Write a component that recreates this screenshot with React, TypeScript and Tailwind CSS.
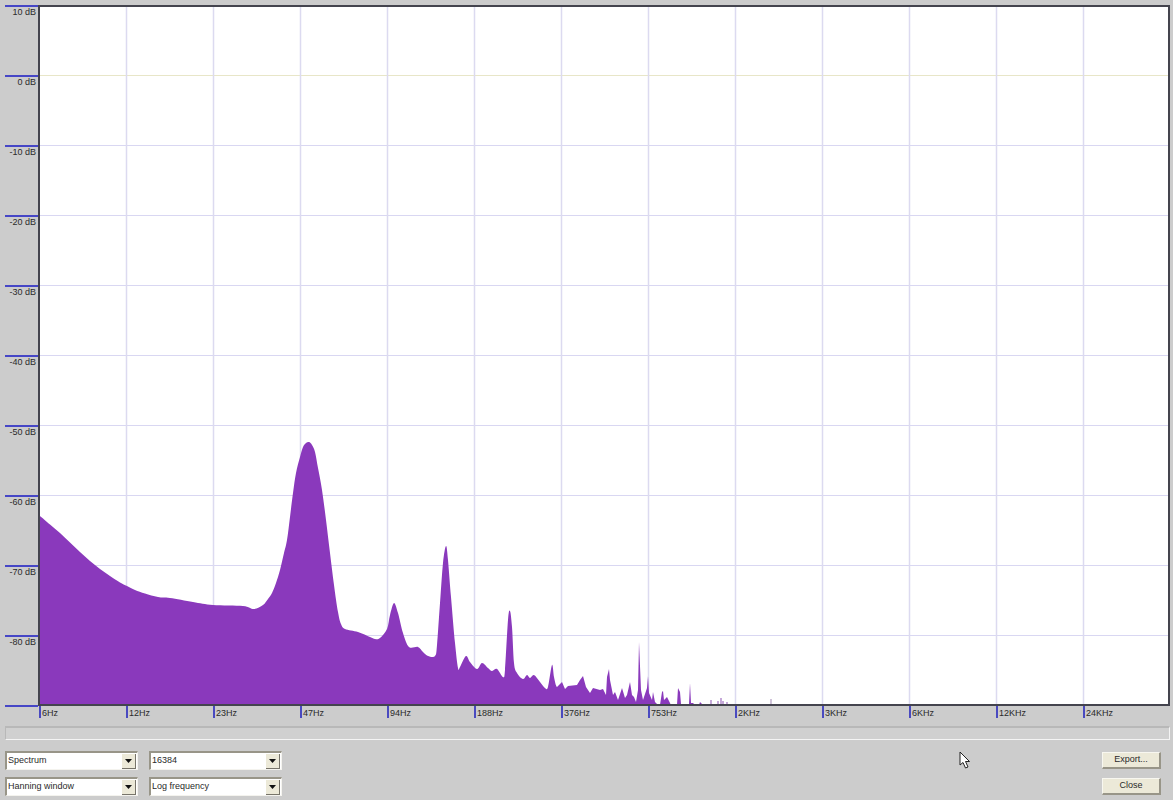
const pts: [number, number][] = [
  [40,516],[50,524.5],[60,533],[70,542.5],[80,552],[90,561],[100,569],[110,576],[120,582.5],[127,586],[135,590],[145,593.5],[158,597],[170,598],[193,602],[213,605],[243,606],[254,609],[263,605],[268,599],[272,593],[276,583],[280,570],[284,553],[287,540],[290,517],[293,493],[296,473],[300,457],[303,447],[306,443],[309,442],[312,445],[315,452],[318,468],[322,490],[326,520],[330,553],[334,585],[338,612],[341,624],[345,629],[358,632],[370,637],[375,639],[380,638],[387,629],[390,615],[394,603],[398,613],[403,633],[409,647],[418,647],[423,652],[428,656],[435,656],[437,645],[440,603],[443,563],[446,546],[448,560],[451,597],[455,643],[458,668],[460,667],[466,656],[470,662],[477,669],[482,663],[488,668],[492,671],[497,669],[503,677],[505,670],[508,620],[510,611],[512,627],[514,663],[517,673],[523,679],[527,675],[530,678],[534,675],[540,682],[545,688],[548,687],[552,665],[554,677],[557,687],[562,682],[565,689],[568,686],[577,685],[580,680],[583,676],[586,687],[590,693],[593,688],[600,690],[603,689],[606,695],[607,677],[609,669],[610,680],[613,695],[615,692],[618,700],[622,688],[625,698],[627,695],[630,682],[632,695],[634,697],[636,702],[638,690],[639,642],[641,690],[643,700],[647,688],[648,676],[649,693],[652,700],[653,692],[655,702],[657,704],[660,705],[662,692],[663,691],[664,700],[667,697],[669,701],[671,705],[677,705],[678,688],[680,692],[681,704],[689,704],[690,683],[691,703],[693,703],[695,705],[699,705],[700,702],[703,705],[727,705],
];

// Smooth curve through the low-frequency part, straight segments through the dense spikes.
function buildPath(points: [number, number][]) {
  let d = `M40,705 L${points[0][0]},${points[0][1]}`;
  for (let i = 1; i < points.length; i++) {
    const p1 = points[i - 1];
    const p2 = points[i];
    if (p2[0] > 560) {
      d += ` L${p2[0]},${p2[1]}`;
      continue;
    }
    const p0 = points[Math.max(0, i - 2)];
    const p3 = points[Math.min(points.length - 1, i + 1)];
    const c1x = p1[0] + (p2[0] - p0[0]) / 6;
    const c1y = p1[1] + (p2[1] - p0[1]) / 6;
    const c2x = p2[0] - (p3[0] - p1[0]) / 6;
    const c2y = p2[1] - (p3[1] - p1[1]) / 6;
    d += ` C${c1x.toFixed(1)},${c1y.toFixed(1)} ${c2x.toFixed(1)},${c2y.toFixed(1)} ${p2[0]},${p2[1]}`;
  }
  return d + " Z";
}

const areaPath = buildPath(pts);
const gridX = [126.5, 213.5, 300.5, 387.5, 474.5, 561.5, 648.5, 735.5, 822.5, 909.5, 996.5, 1083.5];
const gridY = [75.5, 145.5, 215.5, 285.5, 355.5, 425.5, 495.5, 565.5, 635.5];
const dB = ["10 dB", "0 dB", "-10 dB", "-20 dB", "-30 dB", "-40 dB", "-50 dB", "-60 dB", "-70 dB", "-80 dB"];
const freqs = ["6Hz", "12Hz", "23Hz", "47Hz", "94Hz", "188Hz", "376Hz", "753Hz", "2KHz", "3KHz", "6KHz", "12KHz", "24KHz"];

function Combo({ label }: { label: string }) {
  return (
    <div className="w-[133px] h-[19px] flex items-center bg-white border-t-2 border-l-2 border-t-[#989588] border-l-[#989588] border-r border-b border-r-[#f4f3ee] border-b-[#f4f3ee] pl-[1px] pr-[1px]">
      <span className="flex-1 truncate text-[9px] text-[#2a2a2a]">{label}</span>
      <div className="w-[14px] h-[15px] flex items-center justify-center bg-[#ece9d8] border-r border-b border-r-[#77746a] border-b-[#77746a]">
        <svg width="7" height="4" viewBox="0 0 7 4" className="block">
          <path d="M0 0H7L3.5 4Z" fill="#111111" />
        </svg>
      </div>
    </div>
  );
}

function Btn({ label }: { label: string }) {
  return (
    <div className="w-[59px] h-[17px] flex items-center justify-center bg-[#ece9d8] border-t border-l border-t-[#f8f7f0] border-l-[#f8f7f0] border-r-2 border-b-2 border-r-[#989588] border-b-[#989588] text-[9px] text-[#2a2a2a]">
      {label}
    </div>
  );
}

export default function App() {
  return (
    <div className="relative w-[1173px] h-[800px] overflow-hidden bg-[#cccccc] flex flex-col pt-[5px] font-['Liberation_Sans',sans-serif]">
      <div className="flex h-[701px]">
        <div className="w-[38px] pl-[5px] flex flex-col">
          {dB.map((d) => (
            <div key={d} className="h-[70px] shrink-0 border-t-2 border-[#4646c6] text-right pr-[2px] text-[9px] leading-[11px] text-[#2a2a2a]">
              {d}
            </div>
          ))}
          <div className="border-t-2 border-[#4646c6]" />
        </div>
        <div className="w-[1132px] h-[701px] border-2 border-[#44444e] bg-white">
          <svg viewBox="40 7 1128 697" className="block w-[1128px] h-[697px]">
            {gridY.map((y) => (
              <line key={y} x1="40" x2="1168" y1={y} y2={y} stroke={y === 75.5 ? "#e8e6c8" : "#d9d7f2"} strokeWidth="1.2" />
            ))}
            {gridX.map((x) => (
              <line key={x} x1={x} x2={x} y1="7" y2="704" stroke="#dcdaf0" strokeWidth="1.5" />
            ))}
            <path d={areaPath} fill="#8a39bc" />
            <path d="M711 705V700M718 705V701M721 705V698M723 705V701M727 705V702" stroke="#a070c0" strokeWidth="1.2" />
            <path d="M771 705V699" stroke="#b09cc0" strokeWidth="1.2" />
          </svg>
        </div>
      </div>

      <div className="flex pl-[39px] h-[12px]">
        {freqs.map((f) => (
          <div key={f} className="w-[87px] shrink-0 border-l-2 border-[#4a4ac0] pl-[1px] text-[9px] leading-[14px] text-[#2a2a2a]">
            {f}
          </div>
        ))}
      </div>

      <div className="mx-[5px] mt-[8px] w-[1165px] h-[14px] bg-[#d0d0d0] border-t-2 border-t-[#b8b8b8] border-l border-l-[#b8b8b8] border-b border-b-[#f4f4f4] border-r border-r-[#f4f4f4]" />

      <div className="flex justify-between pl-[5px] pr-[12px] mt-[11px]">
        <div className="grid grid-cols-[133px_133px] gap-x-[11px] gap-y-[7px]">
          <Combo label="Spectrum" />
          <Combo label="16384" />
          <Combo label="Hanning window" />
          <Combo label="Log frequency" />
        </div>
        <div className="flex flex-col gap-[9px] pt-[1px]">
          <Btn label="Export..." />
          <Btn label="Close" />
        </div>
      </div>

      <svg width="12" height="18" viewBox="0 0 12 18" className="absolute left-[959px] top-[751px]">
        <path d="M1 1V14L4 11.5L6.5 17L9 16L6.5 10.5H10.5Z" fill="#ffffff" stroke="#222222" strokeWidth="1" strokeLinejoin="round" />
      </svg>
    </div>
  );
}
